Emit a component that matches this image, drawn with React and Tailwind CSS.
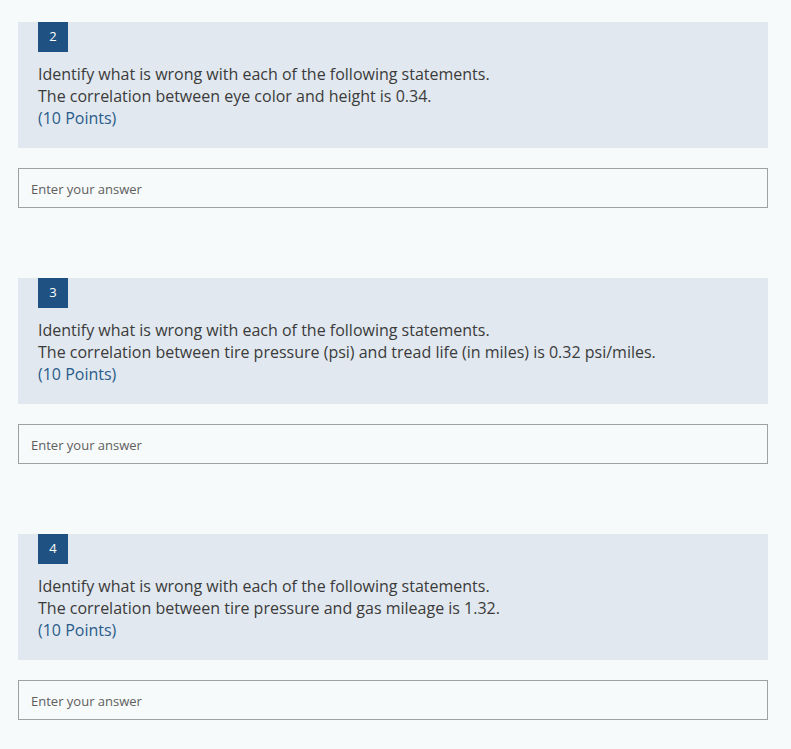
const questions = [
  {
    n: 2,
    text: "The correlation between eye color and height is 0.34.",
  },
  {
    n: 3,
    text: "The correlation between tire pressure (psi) and tread life (in miles) is 0.32 psi/miles.",
  },
  {
    n: 4,
    text: "The correlation between tire pressure and gas mileage is 1.32.",
  },
];

function Question({ n, text }) {
  return (
    <div>
      <div className="bg-[#e1e8ef] px-5 pb-[19px]">
        <div className="w-[30px] h-[30px] bg-[#1f5282] text-white text-[13px] flex items-center justify-center">
          {n}
        </div>
        <div className="mt-[11px] text-[16px] leading-[22px] text-[#3b3b3b]">
          <div>Identify what is wrong with each of the following statements.</div>
          <div>{text}</div>
          <div className="text-[#2a5c8a]">(10 Points)</div>
        </div>
      </div>
      <div className="mt-5 h-10 border border-[#a0a0a0] flex items-center px-3 pt-[3px] text-[13px] text-[#605e5c]">
        Enter your answer
      </div>
    </div>
  );
}

export default function App() {
  return (
    <div
      className="min-h-[749px] bg-[#f6fafb] pt-[22px] pl-[18px] pr-[23px] flex flex-col gap-[70px]"
      style={{ fontFamily: '"Segoe UI", "Open Sans", sans-serif' }}
    >
      {questions.map((q) => (
        <Question key={q.n} {...q} />
      ))}
    </div>
  );
}
